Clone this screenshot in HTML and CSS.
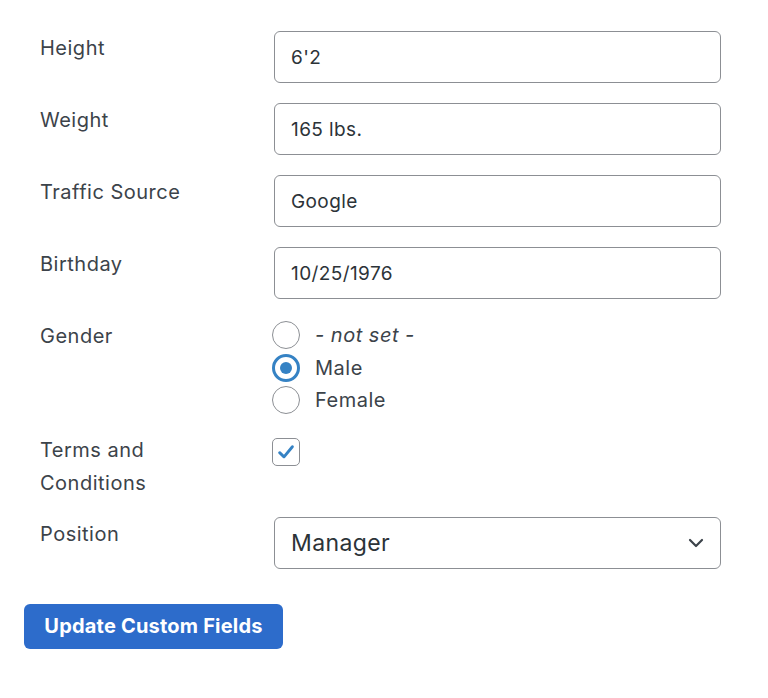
FILE: index.html
```html
<!DOCTYPE html>
<html lang="en">
<head>
    <meta charset="UTF-8">
    <meta name="viewport" content="width=device-width, initial-scale=1.0">
    <title>Custom Fields</title>
    <link rel="stylesheet" href="styles.css">
</head>
<body>
<form class="fields-form">

    <div class="field-row">
        <label class="field-label" for="height">Height</label>
        <input class="text-input" type="text" id="height" value="6'2">
    </div>

    <div class="field-row">
        <label class="field-label" for="weight">Weight</label>
        <input class="text-input" type="text" id="weight" value="165 lbs.">
    </div>

    <div class="field-row">
        <label class="field-label" for="source">Traffic Source</label>
        <input class="text-input" type="text" id="source" value="Google">
    </div>

    <div class="field-row">
        <label class="field-label" for="birthday">Birthday</label>
        <input class="text-input" type="text" id="birthday" value="10/25/1976">
    </div>

    <div class="field-row">
        <div class="field-label">Gender</div>
        <div class="radio-list">
            <label class="radio-option"><span class="radio"></span><em>- not set -</em></label>
            <label class="radio-option"><span class="radio checked"></span>Male</label>
            <label class="radio-option"><span class="radio"></span>Female</label>
        </div>
    </div>

    <div class="field-row terms-row">
        <div class="field-label">Terms and<br>Conditions</div>
        <div class="checkbox-wrap">
            <span class="checkbox">
                <svg viewBox="0 0 20 20" width="22" height="22">
                    <path d="M4.2 10.6 L8.2 14.4 L15.8 5.2" fill="none" stroke="#3582c4" stroke-width="2.6" stroke-linecap="round" stroke-linejoin="round"/>
                </svg>
            </span>
        </div>
    </div>

    <div class="field-row">
        <label class="field-label" for="position">Position</label>
        <div class="select-box" id="position">
            <span>Manager</span>
            <svg class="chevron" viewBox="0 0 20 20" width="20" height="20">
                <path d="M4 7 L10 13 L16 7" fill="none" stroke="#3c434a" stroke-width="2.2" stroke-linecap="round" stroke-linejoin="round"/>
            </svg>
        </div>
    </div>

    <button type="button" class="primary-button">Update Custom Fields</button>
</form>
</body>
</html>
```

FILE: styles.css
```css
body {
    margin: 0;
    padding: 0;
    background: #fff;
    font-family: Inter, "Noto Sans", sans-serif;
    color: #3c434a;
}

.fields-form {
    padding: 31px 0 0 24px;
}

.field-row {
    display: flex;
    align-items: flex-start;
    margin-bottom: 20px;
}

.field-label {
    width: 250px;
    flex-shrink: 0;
    padding-left: 16px;
    padding-top: 1px;
    box-sizing: border-box;
    font-size: 20px;
    letter-spacing: 0.5px;
    line-height: 33px;
}

.text-input {
    width: 447px;
    height: 52px;
    box-sizing: border-box;
    border: 1px solid #8c8f94;
    border-radius: 6px;
    padding: 0 16px;
    font-family: inherit;
    font-size: 19px;
    letter-spacing: 0.4px;
    color: #2c3338;
    background: #fff;
    outline: none;
}

.radio-list {
    display: flex;
    flex-direction: column;
}

.radio-option {
    display: flex;
    align-items: center;
    gap: 15px;
    height: 32.5px;
    font-size: 20px;
    letter-spacing: 0.5px;
    margin-left: -2px;
}

.radio-option em {
    font-style: italic;
}

.radio {
    width: 28px;
    height: 28px;
    flex-shrink: 0;
    box-sizing: border-box;
    border: 1.5px solid #8c8f94;
    border-radius: 50%;
    background: #fff;
    position: relative;
}

.radio.checked {
    border: 3px solid #3582c4;
}

.radio.checked::after {
    content: "";
    position: absolute;
    top: 50%;
    left: 50%;
    width: 12px;
    height: 12px;
    margin: -6px 0 0 -6px;
    border-radius: 50%;
    background: #3582c4;
}

.terms-row {
    margin-top: -4px;
    margin-bottom: 17px;
}

.checkbox-wrap {
    padding-top: 5px;
}

.checkbox {
    display: flex;
    align-items: center;
    justify-content: center;
    width: 28px;
    height: 28px;
    box-sizing: border-box;
    margin-left: -2px;
    border: 1.5px solid #8c8f94;
    border-radius: 5px;
}

.select-box {
    display: flex;
    align-items: center;
    justify-content: space-between;
    width: 447px;
    height: 52px;
    box-sizing: border-box;
    border: 1px solid #8c8f94;
    border-radius: 6px;
    padding: 0 14px 0 16px;
    font-size: 23px;
    letter-spacing: 0.4px;
    color: #2c3338;
}

.primary-button {
    display: block;
    margin-top: 35px;
    width: 259px;
    height: 45px;
    border: none;
    border-radius: 6px;
    background: #2d6ccb;
    color: #fff;
    font-family: inherit;
    font-size: 20px;
    letter-spacing: 0.2px;
    font-weight: 700;
    cursor: pointer;
}
```
